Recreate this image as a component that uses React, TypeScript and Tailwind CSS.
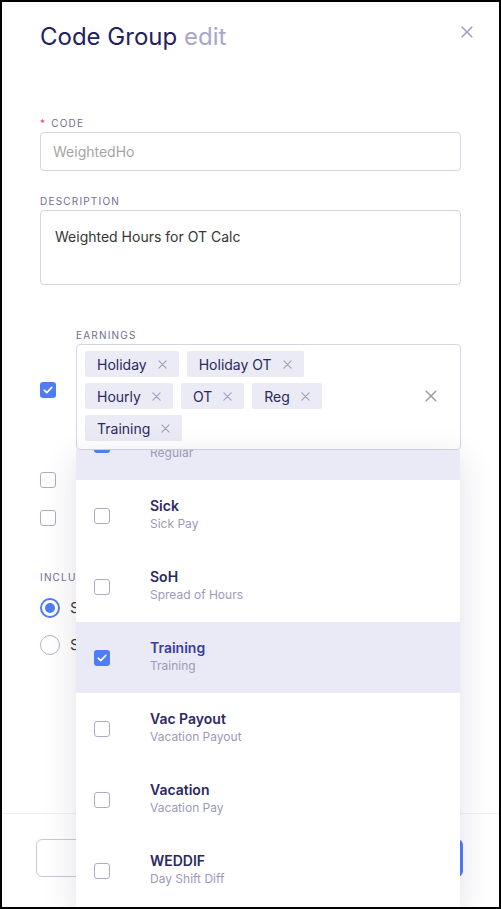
import React from "react";

const tags = [["Holiday", "Holiday OT"], ["Hourly", "OT", "Reg"], ["Training"]];

const options = [
  { code: "Reg", desc: "Regular", checked: true },
  { code: "Sick", desc: "Sick Pay", checked: false },
  { code: "SoH", desc: "Spread of Hours", checked: false },
  { code: "Training", desc: "Training", checked: true },
  { code: "Vac Payout", desc: "Vacation Payout", checked: false },
  { code: "Vacation", desc: "Vacation Pay", checked: false },
  { code: "WEDDIF", desc: "Day Shift Diff", checked: false },
];

function Cross({ size, className }: { size: number; className?: string }) {
  return (
    <svg width={size} height={size} viewBox="0 0 10 10" className={className} fill="none">
      <path d="M1 1 L9 9 M9 1 L1 9" stroke="currentColor" strokeWidth="1.3" strokeLinecap="round" />
    </svg>
  );
}

function Checkbox({ checked }: { checked: boolean }) {
  if (checked) {
    return (
      <div className="w-4 h-4 rounded-[3px] bg-[#4f7cf7] flex items-center justify-center shrink-0">
        <svg width="10" height="8" viewBox="0 0 10 8" fill="none">
          <path d="M1.2 4.2 L3.8 6.6 L8.8 1.4" stroke="white" strokeWidth="1.6" strokeLinecap="round" strokeLinejoin="round" />
        </svg>
      </div>
    );
  }
  return <div className="w-4 h-4 rounded-[3px] border-[1.5px] border-[#aeabc8] bg-white shrink-0" />;
}

export default function App() {
  return (
    <div
      className="relative w-[501px] h-[909px] border-2 border-black bg-white overflow-hidden flex flex-col"
      style={{ fontFamily: "Inter, 'Noto Sans', sans-serif" }}
    >
      {/* header */}
      <div className="flex items-start justify-between pl-[38px] pr-[26px] pt-[19px]">
        <h1 className="text-[24px] leading-8 text-[#23215f]">
          Code Group <span className="text-[#a8a6cb]">edit</span>
        </h1>
        <button className="mt-[5px] text-[#a09ec2]">
          <Cross size={12} />
        </button>
      </div>

      <div className="flex-1 px-[38px]">
        {/* code */}
        <div className="mt-[64px] flex items-center text-[10px] leading-3 tracking-[0.12em] text-[#6f6d95]">
          <span className="text-[#e5456f] mr-[5px]">*</span>CODE
        </div>
        <div className="mt-[3px] h-[39px] border border-[#d5d4e3] rounded-[4px] flex items-center px-3 text-[14px] text-[#a5a5a5]">
          WeightedHo
        </div>

        {/* description */}
        <div className="mt-6 text-[10px] leading-3 tracking-[0.12em] text-[#6f6d95]">DESCRIPTION</div>
        <div className="mt-[3px] h-[75px] border border-[#d5d4e3] rounded-[4px] px-[14px] pt-[16px] text-[14px] leading-5 text-[#353535]">
          Weighted Hours for OT Calc
        </div>

        {/* earnings */}
        <div className="mt-[44px] flex items-center gap-5">
          <Checkbox checked />
          <div className="flex-1">
            <div className="text-[10px] leading-3 tracking-[0.12em] text-[#6f6d95]">EARNINGS</div>
            <div className="mt-[3px] border border-[#d5d4e3] rounded-[4px] pl-2 pt-[6px] pb-[8px] flex items-center">
              <div className="w-[316px] flex flex-col gap-[6px]">
                {tags.map((row, i) => (
                  <div key={i} className="flex gap-2">
                    {row.map((t) => (
                      <div
                        key={t}
                        className="h-[26px] bg-[#ebebf6] rounded-[2px] pl-3 pr-[12px] flex items-center gap-[11px] text-[14px] text-[#2a2860]"
                      >
                        {t}
                        <Cross size={9} className="text-[#a3a1bb]" />
                      </div>
                    ))}
                  </div>
                ))}
              </div>
              <div className="flex-1 flex justify-end pr-[23px]">
                <Cross size={12} className="text-[#9d9d9d]" />
              </div>
            </div>
          </div>
        </div>

        <div className="mt-[22px] flex items-center gap-5 h-4">
          <Checkbox checked={false} />
          <span className="text-[14px] text-[#2a2860]">Deductions</span>
        </div>
        <div className="mt-[22px] flex items-center gap-5 h-4">
          <Checkbox checked={false} />
          <span className="text-[14px] text-[#2a2860]">Taxes</span>
        </div>

        {/* include */}
        <div className="mt-[45px] text-[10px] leading-3 tracking-[0.12em] text-[#6f6d95]">INCLUDE IN CALCULATION</div>
        <div className="mt-[14px] flex items-center gap-[10px]">
          <div className="w-5 h-5 rounded-full border-2 border-[#4f7cf7] flex items-center justify-center">
            <div className="w-[10px] h-[10px] rounded-full bg-[#4f7cf7]" />
          </div>
          <span className="text-[15px] text-[#3a3a3a]">Sum of hours</span>
        </div>
        <div className="mt-[14px] flex items-center gap-[10px]">
          <div className="w-5 h-5 rounded-full border-[1.5px] border-[#b4b2cc]" />
          <span className="text-[15px] text-[#3a3a3a]">Sum of amounts</span>
        </div>
      </div>

      {/* footer */}
      <div className="h-[94px] border-t border-[#eeeef4] pl-[34px] pr-[36px] pt-[25px] flex gap-4">
        <button className="flex-1 h-[38px] rounded-md border border-[#c9c7df] bg-white text-[14px] text-[#4f4d80]">
          Cancel
        </button>
        <button className="flex-1 h-[38px] rounded-md bg-[#4f7cf7] text-[14px] text-white">Save</button>
      </div>

      {/* earnings dropdown */}
      <div className="absolute left-[74px] top-[448px] w-[384px] bottom-0 bg-white shadow-[0_8px_32px_rgba(40,40,90,0.14)] overflow-hidden">
        <div className="-mt-[41px]">
          {options.map((o) => {
            const active = o.checked;
            return (
              <div
                key={o.code}
                className={
                  "h-[71px] flex items-center pl-[18px] gap-10 " + (active ? "bg-[#eaeaf6]" : "bg-white")
                }
              >
                <Checkbox checked={o.checked} />
                <div className="flex flex-col pb-[3px]">
                  <span
                    className={
                      "text-[14px] leading-5 font-semibold " + (active ? "text-[#3b3d9c]" : "text-[#2b2963]")
                    }
                  >
                    {o.code}
                  </span>
                  <span className="text-[12px] leading-4 text-[#9c9ab8]">{o.desc}</span>
                </div>
              </div>
            );
          })}
        </div>
      </div>
    </div>
  );
}
